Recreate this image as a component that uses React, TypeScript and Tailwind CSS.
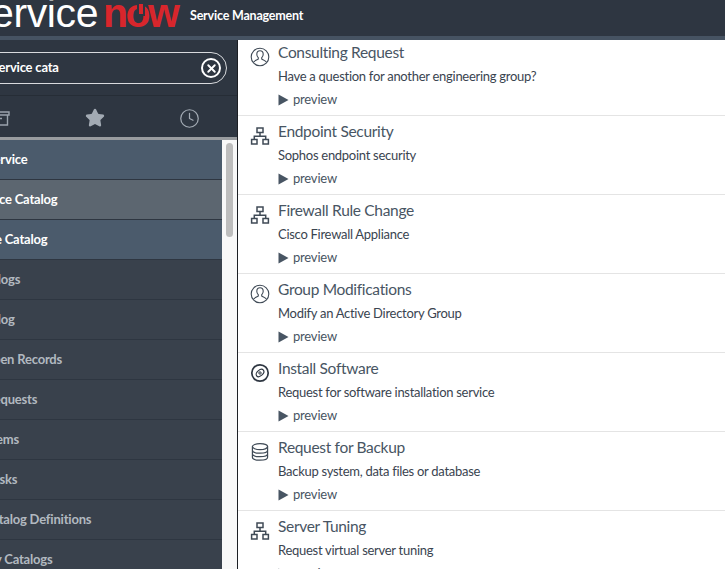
import { Star, Clock, X } from "lucide-react";

type IconKind = "user" | "network" | "disc" | "db";

interface CatalogItem {
  title: string;
  desc: string;
  icon: IconKind;
}

const ITEMS: CatalogItem[] = [
  { title: "Consulting Request", desc: "Have a question for another engineering group?", icon: "user" },
  { title: "Endpoint Security", desc: "Sophos endpoint security", icon: "network" },
  { title: "Firewall Rule Change", desc: "Cisco Firewall Appliance", icon: "network" },
  { title: "Group Modifications", desc: "Modify an Active Directory Group", icon: "user" },
  { title: "Install Software", desc: "Request for software installation service", icon: "disc" },
  { title: "Request for Backup", desc: "Backup system, data files or database", icon: "db" },
  { title: "Server Tuning", desc: "Request virtual server tuning", icon: "network" },
];

const NAV = [
  { label: "Self-Service", active: "blue" },
  { label: "Service Catalog", active: "grey" },
  { label: "Service Catalog", active: "blue" },
  { label: "Catalogs" },
  { label: "Catalog" },
  { label: "Open Records" },
  { label: "Requests" },
  { label: "Items" },
  { label: "Tasks" },
  { label: "Catalog Definitions" },
  { label: "My Catalogs" },
];

// how far each label's start is pushed off the left edge of the page
const NAV_OFFSET = [
  "-ml-[39px]", "-ml-[29px]", "-ml-[39px]", "-ml-[28px]", "-ml-[28px]", "-ml-[17px]",
  "-ml-[14px]", "-ml-[12px]", "-ml-[13px]", "-ml-[16px]", "-ml-[17px]",
];

function ItemIcon({ kind }: { kind: IconKind }) {
  if (kind === "user") {
    return (
      <svg viewBox="0 0 20 20" className="h-[20px] w-[20px]" fill="none" stroke="#3f4a56" strokeWidth="1.1">
        <circle cx="10" cy="10" r="8.8" />
        <path d="M10 3.8c-2 0-3.2 1.5-3.2 3.5 0 1.5.6 2.7 1.5 3.4v1.2c0 .6-3 1.2-4.6 3M10 3.8c2 0 3.2 1.5 3.2 3.5 0 1.5-.6 2.7-1.5 3.4v1.2c0 .6 3 1.2 4.6 3" />
      </svg>
    );
  }
  if (kind === "network") {
    return (
      <svg viewBox="0 0 20 20" className="h-[20px] w-[20px]" fill="none" stroke="#3f4a56" strokeWidth="1.5">
        <rect x="7" y="2" width="6" height="4.5" />
        <rect x="1.6" y="13.5" width="5.4" height="4.5" />
        <rect x="13" y="13.5" width="5.4" height="4.5" />
        <path d="M10 6.5v3.7M4.3 13.5v-3.3h11.4v3.3" />
      </svg>
    );
  }
  if (kind === "disc") {
    return (
      <svg viewBox="0 0 20 20" className="h-[20px] w-[20px]" fill="none" stroke="#2e3641">
        <circle cx="10" cy="10" r="8.2" strokeWidth="1.7" />
        <ellipse cx="10" cy="10" rx="4.4" ry="2.8" strokeWidth="1.2" transform="rotate(-40 10 10)" />
        <circle cx="10" cy="10" r="1.2" strokeWidth="1" />
      </svg>
    );
  }
  return (
    <svg viewBox="0 0 20 20" className="h-[20px] w-[20px]" fill="none" stroke="#3f4a56" strokeWidth="1.2">
      <ellipse cx="10" cy="4.6" rx="7.6" ry="3" />
      <path d="M2.4 4.6v10.6c0 1.7 3.4 3 7.6 3s7.6-1.3 7.6-3V4.6M2.4 8.2c0 1.7 3.4 3 7.6 3s7.6-1.3 7.6-3M2.4 11.7c0 1.7 3.4 3 7.6 3s7.6-1.3 7.6-3" />
    </svg>
  );
}

function FormIcon() {
  return (
    <svg viewBox="0 0 20 20" className="h-[20px] w-[20px]" fill="none" stroke="#9aa3ad" strokeWidth="1.4">
      <path d="M1 4h18v3H1zM2.5 7v10h15V7M6 10.5h6" />
    </svg>
  );
}

function Row({ item, first }: { item: CatalogItem; first: boolean }) {
  return (
    <div className={`flex h-[79px] shrink-0 border-b border-[#e4e4e4] pl-[12px] ${first ? "-mt-[3px]" : ""}`}>
      <div className="mr-[8px] w-[20px] shrink-0 pt-[10px]">
        <ItemIcon kind={item.icon} />
      </div>
      <div className="flex flex-col pt-[3px]">
        <div className="text-[15.5px] leading-[24px] tracking-[-0.32px] text-[#485563]">{item.title}</div>
        <div className="mt-[1px] text-[13px] leading-[22px] tracking-[-0.28px] text-[#3a4450]">{item.desc}</div>
        <div className="mt-[1px] flex h-[23px] items-center gap-[4px] text-[13px] tracking-[-0.2px] text-[#485563]">
          <svg viewBox="0 0 11 12" className="h-[12px] w-[11px]">
            <path d="M0.5 0.5 L10.5 6 L0.5 11.5 Z" fill="#485563" />
          </svg>
          <span>preview</span>
        </div>
      </div>
    </div>
  );
}

export default function App() {
  return (
    <div className="flex h-[569px] w-[725px] flex-col overflow-hidden bg-white font-['Lato',sans-serif]">
      <header className="flex h-[36px] shrink-0 items-center overflow-hidden bg-[#2e3641]">
        <div className="-ml-[29px] -mt-[11px] flex w-[219px] shrink-0 items-baseline font-['Liberation_Sans',sans-serif] text-[41px] leading-[36px]">
          <span className="font-normal tracking-[-0.4px] text-white">service</span>
          <span className="ml-[5px] flex font-bold tracking-[-2.6px] text-[#d8262c]">
            n
            <span className="relative">
              o
              <span className="absolute left-[11px] top-[9px] flex h-[12px] w-[8px] justify-center bg-[#2e3641]">
                <span className="h-[10px] w-[4px] bg-[#d8262c]" />
              </span>
            </span>
            w
          </span>
        </div>
        <span className="-mt-[4px] text-[12.5px] font-bold tracking-[-0.2px] text-white">Service Management</span>
      </header>
      <div className="h-[4px] shrink-0 bg-[#465362]" />
      <div className="flex min-h-0 flex-1">
        <aside className="flex w-[238px] shrink-0 flex-col border-r border-[#1c1f24] bg-[#2e3641]">
          <div className="h-[56px] shrink-0 border-b border-[#262d36] pt-[12px]">
            <div className="-ml-[20px] flex h-[32px] w-[247px] items-center justify-between rounded-full border border-[#d8dadd] pl-[12px] pr-[5px]">
              <span className="text-[13px] font-bold tracking-[-0.2px] text-white">service cata</span>
              <span className="flex h-[20px] w-[20px] items-center justify-center rounded-full border-2 border-white">
                <X size={13} strokeWidth={3.5} className="text-white" />
              </span>
            </div>
          </div>
          <div className="flex h-[41px] shrink-0 items-center pt-[3px]">
            <div className="-ml-[1px] flex w-[11px] justify-end overflow-hidden">
              <div className="shrink-0"><FormIcon /></div>
            </div>
            <Star size={20} className="ml-[75px] fill-[#a3abb4] text-[#a3abb4]" />
            <Clock size={21} strokeWidth={1.4} className="ml-[74px] text-[#a3abb4]" />
          </div>
          <div className="h-[3px] shrink-0 bg-[#999c9f]" />
          <div className="flex min-h-0 flex-1">
            <nav className="w-[222px] shrink-0 overflow-hidden bg-[#39414c]">
              {NAV.map((n, i) => (
                <div
                  key={i}
                  className={`flex h-[40px] items-center whitespace-nowrap border-b border-[#2e3641] text-[13px] font-bold tracking-[-0.2px] ${
                    n.active === "blue"
                      ? "bg-[#4b5b6c] text-white"
                      : n.active === "grey"
                        ? "bg-[#5c6670] text-white"
                        : "text-[#b2b9c0]"
                  }`}
                >
                  <span className={NAV_OFFSET[i]}>{n.label}</span>
                </div>
              ))}
            </nav>
            <div className="flex-1 bg-[#f8f8f8] px-[4px] pt-[3px]">
              <div className="h-[94px] rounded-full bg-[#bdbdbd]" />
            </div>
          </div>
        </aside>
        <main className="flex min-w-0 flex-1 flex-col overflow-hidden">
          {ITEMS.map((it, i) => (
            <Row key={it.title} item={it} first={i === 0} />
          ))}
        </main>
      </div>
    </div>
  );
}
